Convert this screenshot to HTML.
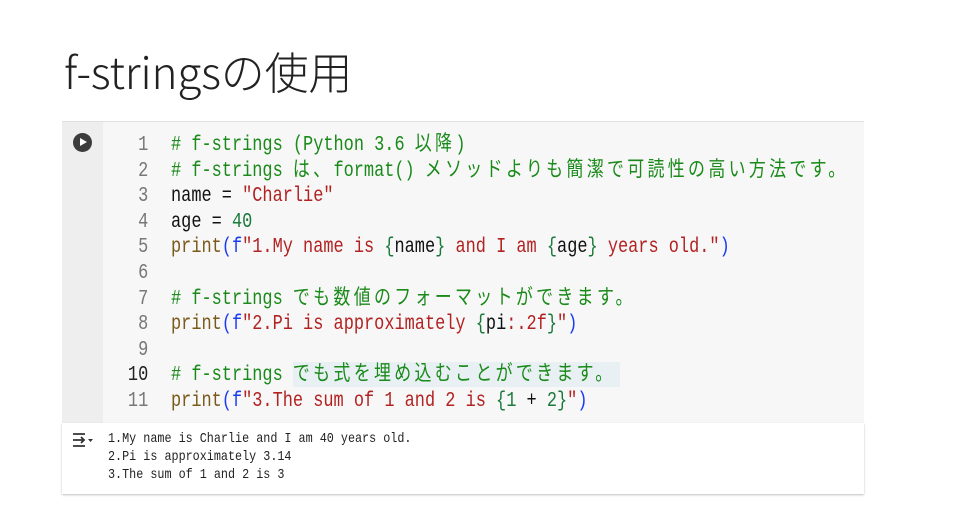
<!DOCTYPE html>
<html><head><meta charset="utf-8"><style>
body{margin:0;width:955px;height:525px;background:#fff;position:relative;overflow:hidden;font-family:"Liberation Sans","Noto Sans CJK JP",sans-serif}
.title{position:absolute;left:64px;top:40px;font-size:44px;font-weight:300;color:#222;font-family:"Noto Sans CJK JP","Liberation Sans",sans-serif;line-height:60px;letter-spacing:-0.2px;white-space:pre}
.cell{position:absolute;left:62px;top:121px;width:802px;height:302px;background:#f7f7f7;border-top:1px solid #e0e0e0}
.gut{position:absolute;left:62px;top:122px;width:41px;height:301px;background:#eeeeee}
.run{position:absolute;left:73px;top:133px;width:19px;height:19px;border-radius:50%;background:#3c3c3c}
.run:after{content:"";position:absolute;left:7px;top:5px;border-left:7px solid #fff;border-top:4.5px solid transparent;border-bottom:4.5px solid transparent}
.ln{position:absolute;font-family:"Liberation Mono","Noto Sans CJK JP",monospace;font-size:21px;line-height:25.6px;white-space:pre;height:25.6px;transform:scaleX(0.806);transform-origin:0 0}
.num{left:116px;width:40px;text-align:right;color:#777}
.code{left:171px;color:#111}
.j{letter-spacing:4.15px}
.c{color:#1a8a1a}.s{color:#b22222}.f{color:#7a5a1a}.b{color:#1a3cf0}.n{color:#1a7a3a}
.hl{position:absolute;left:293px;top:362px;width:327px;height:25px;background:#e8f0f3}
.out{position:absolute;left:62px;top:423px;width:802px;height:71px;background:#fff;box-shadow:0 1px 2px rgba(0,0,0,.25)}
.o{position:absolute;left:108px;font-family:"Liberation Mono",monospace;font-size:14px;color:#222;line-height:18px;white-space:pre;transform:scaleX(0.84);transform-origin:0 0}
</style></head><body>
<div class="title">f-stringsの使用</div>
<div class="cell"></div>
<div class="gut"></div>
<div class="run"></div>
<div class="hl"></div>
<div class="ln num" style="top:133px">1</div>
<div class="ln num" style="top:159px">2</div>
<div class="ln num" style="top:184px">3</div>
<div class="ln num" style="top:210px">4</div>
<div class="ln num" style="top:235px">5</div>
<div class="ln num" style="top:261px">6</div>
<div class="ln num" style="top:287px">7</div>
<div class="ln num" style="top:312px">8</div>
<div class="ln num" style="top:338px">9</div>
<div class="ln num" style="top:363px;color:#222">10</div>
<div class="ln num" style="top:389px">11</div>
<div class="ln code c" style="top:133px"># f-strings (Python 3.6 <span class="j">以降</span>)</div>
<div class="ln code c" style="top:159px"># f-strings <span class="j">は、</span>format() <span class="j">メソッドよりも簡潔で可読性の高い方法です。</span></div>
<div class="ln code" style="top:184px">name = <span class="s">"Charlie"</span></div>
<div class="ln code" style="top:210px">age = <span class="n">40</span></div>
<div class="ln code" style="top:235px"><span class="f">print</span><span class="b">(f</span><span class="s">"1.My name is </span><span class="n">{</span>name<span class="n">}</span><span class="s"> and I am </span><span class="n">{</span>age<span class="n">}</span><span class="s"> years old."</span><span class="b">)</span></div>
<div class="ln code c" style="top:287px"># f-strings <span class="j">でも数値のフォーマットができます。</span></div>
<div class="ln code" style="top:312px"><span class="f">print</span><span class="b">(f</span><span class="s">"2.Pi is approximately </span><span class="n">{</span>pi<span class="s">:.2f</span><span class="n">}</span><span class="s">"</span><span class="b">)</span></div>
<div class="ln code c" style="top:363px"># f-strings <span class="j">でも式を埋め込むことができます。</span></div>
<div class="ln code" style="top:389px"><span class="f">print</span><span class="b">(f</span><span class="s">"3.The sum of 1 and 2 is </span><span class="n">{</span><span class="n">1</span> + <span class="n">2</span><span class="n">}</span><span class="s">"</span><span class="b">)</span></div>
<div class="out"></div>
<svg style="position:absolute;left:71px;top:432px" width="24" height="16" viewBox="0 0 24 16"><path d="M2 2h12M2 14h12M2 8h11M10 5l3 3-3 3" stroke="#333" stroke-width="1.8" fill="none"/><path d="M17 7h5l-2.5 3z" fill="#333"/></svg>
<div class="o" style="top:430px">1.My name is Charlie and I am 40 years old.</div>
<div class="o" style="top:448px">2.Pi is approximately 3.14</div>
<div class="o" style="top:466px">3.The sum of 1 and 2 is 3</div>
</body></html>
